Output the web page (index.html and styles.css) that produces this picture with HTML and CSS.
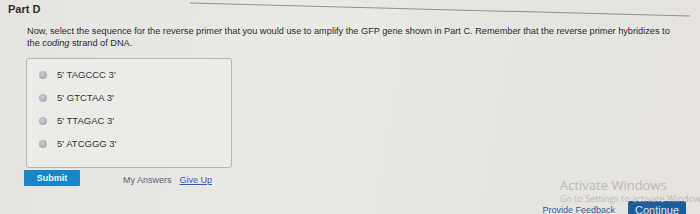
FILE: index.html
```html
<!DOCTYPE html>
<html lang="en">
<head>
    <meta charset="UTF-8">
    <title>Part D</title>
    <link rel="stylesheet" href="styles.css">
</head>
<body>
    <div class="page">
        <!-- En-tete de la partie -->
        <div class="part-header">
            <span class="part-title">Part D</span>
            <span class="part-rule"></span>
        </div>

        <div class="question">
            <p class="prompt">Now, select the sequence for the reverse primer that you would use to amplify the GFP gene shown in Part C. Remember that the reverse primer hybridizes to the <em>coding</em> strand of DNA.</p>

            <div class="choices">
                <label class="choice"><span class="radio"></span>5' TAGCCC 3'</label>
                <label class="choice"><span class="radio"></span>5' GTCTAA 3'</label>
                <label class="choice"><span class="radio"></span>5' TTAGAC 3'</label>
                <label class="choice"><span class="radio"></span>5' ATCGGG 3'</label>
            </div>

            <div class="actions">
                <button class="btn-submit">Submit</button>
                <a href="#" class="link-answers">My Answers</a>
                <a href="#" class="link-giveup">Give Up</a>
            </div>
        </div>

        <div class="footer">
            <a href="#" class="link-feedback">Provide Feedback</a>
            <button class="btn-continue">Continue</button>
        </div>
    </div>

    <!-- filigrane windows -->
    <div class="watermark">
        <div class="wm-title">Activate Windows</div>
        <div class="wm-sub">Go to Settings to activate Windows.</div>
    </div>
</body>
</html>
```

FILE: styles.css
```css
html, body {
    margin: 0;
    height: 100%;
    overflow: hidden;
}

body {
    font-family: "Liberation Sans", Arial, sans-serif;
    background: linear-gradient(100deg, #e6e4df 0%, #ebe9e4 45%, #e4e6e0 70%, #e7e3df 100%);
    color: #3a3f4a;
    position: relative;
}

.page {
    height: 214px;
    display: flex;
    flex-direction: column;
    box-sizing: border-box;
}

.part-header {
    display: flex;
    align-items: flex-start;
    padding: 3px 10px 0 8px;
}

.part-title {
    font-size: 11px;
    font-weight: bold;
    color: #2b2e36;
    line-height: 13px;
}

.part-rule {
    flex: 1;
    margin: 6px 0 0 150px;
    border-top: 1px solid #8e939c;
    transform: rotate(1.5deg);
}

.question {
    padding: 9px 0 0 27px;
}

.prompt {
    margin: 0;
    font-size: 9.2px;
    line-height: 12px;
    color: #262b38;
    width: 656px;
}

.choices {
    margin: 9px 0 0 -1px;
    width: 206px;
    height: 110px;
    border: 1px solid #b9b8b5;
    border-radius: 3px;
    background: #ecebe7;
    box-sizing: border-box;
    padding: 11px 0 0 12px;
    display: flex;
    flex-direction: column;
    gap: 13px;
}

.choice {
    display: flex;
    align-items: center;
    font-size: 9.5px;
    line-height: 10px;
    color: #30343d;
}

.radio {
    width: 8px;
    height: 8px;
    border-radius: 50%;
    background: radial-gradient(circle at 40% 35%, #c7ccd3, #9ba2ad);
    margin-right: 10px;
}

.actions {
    display: flex;
    align-items: center;
    margin: 2px 0 0 -3px;
}

.btn-submit {
    width: 56px;
    height: 16px;
    padding: 0;
    border: none;
    border-radius: 1px;
    background: #1a85c6;
    color: #eef4f8;
    font-family: inherit;
    font-size: 9px;
    font-weight: bold;
}

.link-answers {
    margin: 4px 0 0 43px;
    font-size: 9px;
    color: #5a6273;
    text-decoration: none;
}

.link-giveup {
    margin: 4px 0 0 8px;
    font-size: 9px;
    color: #2d64b3;
}

.footer {
    margin-top: auto;
    display: flex;
    justify-content: flex-end;
    align-items: flex-start;
    height: 13px;
    padding-right: 14px;
    gap: 13px;
}

.link-feedback {
    font-size: 9px;
    color: #2f5c9e;
    text-decoration: none;
    margin-top: 4px;
}

.btn-continue {
    width: 58px;
    height: 18px;
    padding: 0;
    border: none;
    border-radius: 2px;
    background: #1d5c9c;
    color: #dfe8f2;
    font-family: inherit;
    font-size: 11px;
}

.watermark {
    position: absolute;
    left: 560px;
    top: 178px;
    color: #bdbbb6;
    white-space: nowrap;
    pointer-events: none;
}

.wm-title {
    font-family: "Open Sans", sans-serif;
    font-size: 13px;
    line-height: 15px;
}

.wm-sub {
    font-family: "Open Sans", sans-serif;
    font-size: 9px;
    line-height: 11px;
}
```
